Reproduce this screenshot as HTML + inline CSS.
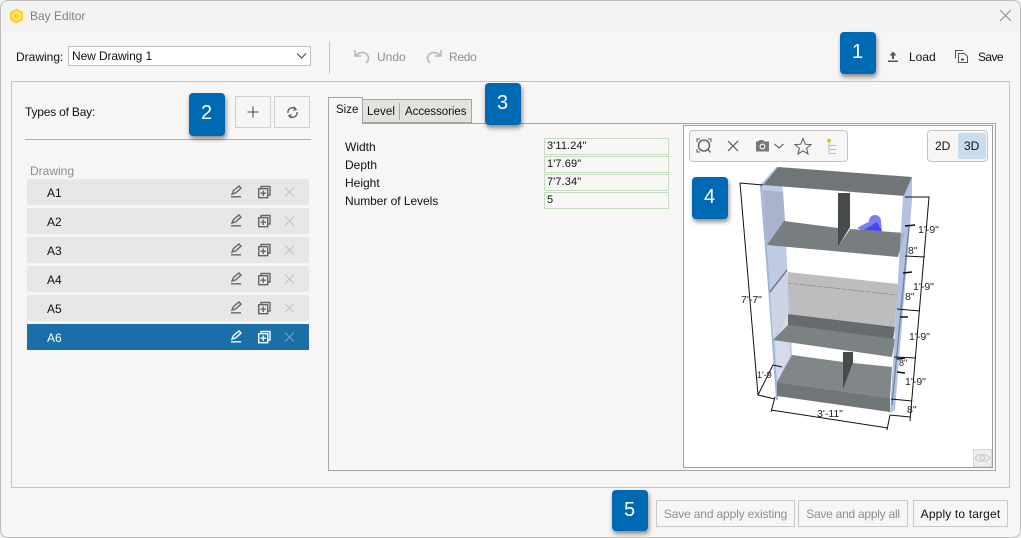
<!DOCTYPE html>
<html><head><meta charset="utf-8"><title>Bay Editor</title>
<style>
*{box-sizing:border-box}
html,body{margin:0;padding:0;width:1021px;height:538px;overflow:hidden;background:#f0f0f0;}
body{font-family:"Liberation Sans",sans-serif;font-size:12px;color:#111;position:relative}
.a{position:absolute}
.t{position:absolute;white-space:nowrap;line-height:16px}
.badge{position:absolute;width:36px;height:42px;background:#0069b4;border-radius:4px;box-shadow:1px 3px 5px rgba(0,0,0,.45);color:#fff;font-size:20px;text-align:center;line-height:41px;padding-right:1px}
.row{position:absolute;left:27px;width:282px;height:26px;background:#e7e7e7}
.row .n{position:absolute;left:20px;top:6px;line-height:16px}
.row svg{position:absolute;left:0;top:0}
.field{position:absolute;left:544px;width:125px;height:17px;border:1px solid #c6dcc0;padding-left:2px;line-height:14px;font-size:11px;letter-spacing:.1px}
.btn{position:absolute;top:500px;height:27px;border:1px solid #c8c8c8;background:#f7f6f5;text-align:center;line-height:27px}
</style></head><body>
<div class="a" style="left:0;top:0;width:1021px;height:538px;background:#f7f6f5;border:1px solid #bdbdbd;border-radius:8px;overflow:hidden">
<div class="a" style="left:0;top:0;width:1021px;height:30px;background:#f3f3f3"></div>
</div>
<svg class="a" style="left:9px;top:8px" width="15" height="16" viewBox="0 0 15 16"><path d="M7.5 .5L14 4v8l-6.500 3.500L1 12V4z" fill="#fbd12e"/><circle cx="7.500" cy="8" r="3.500" fill="none" stroke="#fff3b8" stroke-width="1.300"/></svg>
<div class="t" style="left:30px;top:8px;color:#7f7f7f">Bay Editor</div>
<svg class="a" style="left:999px;top:9px" width="13" height="13"><path d="M1 1L12 12M12 1L1 12" stroke="#8a8a8a" stroke-width="1" fill="none"/></svg>

<div class="t" style="left:16px;top:49px">Drawing:</div>
<div class="a" style="left:68px;top:46px;width:243px;height:20px;background:#fff;border:1px solid #bfbfbf"></div>
<div class="t" style="left:72px;top:48px;letter-spacing:-.1px">New Drawing 1</div>
<svg class="a" style="left:296px;top:52px" width="11" height="8"><path d="M1 1.500L5.500 6L10 1.500" stroke="#444" stroke-width="1.100" fill="none"/></svg>
<div class="a" style="left:329px;top:41px;width:1px;height:33px;background:#c4c4c4"></div>

<svg class="a" style="left:352px;top:48px" width="20" height="18"><path d="M3 2V8H9" stroke="#b5b5b5" stroke-width="1.500" fill="none"/><path d="M3.500 8C6 4 12 3.500 15 6.500C17.500 9 16.500 13 14 15" stroke="#b5b5b5" stroke-width="1.500" fill="none"/></svg>
<div class="t" style="left:377px;top:49px;color:#8f8f8f">Undo</div>
<svg class="a" style="left:424px;top:48px" width="20" height="18"><path d="M17 2V8H11" stroke="#b5b5b5" stroke-width="1.500" fill="none"/><path d="M16.500 8C14 4 8 3.500 5 6.500C2.500 9 3.500 13 6 15" stroke="#b5b5b5" stroke-width="1.500" fill="none"/></svg>
<div class="t" style="left:449px;top:49px;color:#8f8f8f;letter-spacing:-.3px">Redo</div>

<svg class="a" style="left:887px;top:50px" width="12" height="13"><path d="M6 1.500L2.500 5.500H5V9H7V5.500H9.500zM1 10.500H11V12H1z" fill="#555"/></svg>
<div class="t" style="left:909px;top:49px">Load</div>
<svg class="a" style="left:954px;top:49px" width="16" height="15" fill="none" stroke="#555"><path d="M1.500 9.500V1.500H9"/><path d="M4.500 4.500H10.500L13.500 7.500V13.500H4.500z"/><rect x="7" y="9.500" width="3" height="2" fill="#555" stroke="none"/></svg>
<div class="t" style="left:978px;top:49px;letter-spacing:-.6px">Save</div>

<div class="a" style="left:11px;top:81px;width:999px;height:407px;border:1px solid #c4c4c4"></div>
<div class="t" style="left:25px;top:104px;letter-spacing:-.2px">Types of Bay:</div>
<div class="a" style="left:25px;top:139px;width:286px;height:1px;background:#b0b0b0"></div>
<div class="a" style="left:235px;top:96px;width:36px;height:32px;border:1px solid #cfcfcf"></div>
<svg class="a" style="left:246px;top:105px" width="14" height="14"><path d="M7 1.500V12.500M1.500 7H12.500" stroke="#666" stroke-width="1.300"/></svg>
<div class="a" style="left:274px;top:96px;width:36px;height:32px;border:1px solid #cfcfcf"></div>
<svg class="a" style="left:286px;top:106px" width="13" height="13" fill="none" stroke="#555" stroke-width="1.300"><path d="M2 7A4.500 4.500 0 0 1 9.500 3M11 6A4.500 4.500 0 0 1 3.500 10"/><path d="M8 .8L10.300 3.500L7.300 4.500M5 12.200L2.700 9.500L5.700 8.500" stroke-width="1"/></svg>

<div class="t" style="left:30px;top:163px;color:#8c8c8c">Drawing</div>

<div class="row" style="top:179px"><span class="n">A1</span><svg width="282" height="26" fill="none"><g stroke="#666" stroke-width="1.400"><path d="M205 15L206.500 11.500L212 7L214 9.200L208.500 14zM204 17.800H214"/><rect x="231.700" y="9.700" width="9" height="9"/><path d="M234 9V7.500H243V16H241M236.200 11.500V17M233.500 14.200H239"/></g><path d="M258 8.500L267 17.500M267 8.500L258 17.500" stroke="#c3c3c3" stroke-width="1.200"/></svg></div>
<div class="row" style="top:208px"><span class="n">A2</span><svg width="282" height="26" fill="none"><g stroke="#666" stroke-width="1.400"><path d="M205 15L206.500 11.500L212 7L214 9.200L208.500 14zM204 17.800H214"/><rect x="231.700" y="9.700" width="9" height="9"/><path d="M234 9V7.500H243V16H241M236.200 11.500V17M233.500 14.200H239"/></g><path d="M258 8.500L267 17.500M267 8.500L258 17.500" stroke="#c3c3c3" stroke-width="1.200"/></svg></div>
<div class="row" style="top:237px"><span class="n">A3</span><svg width="282" height="26" fill="none"><g stroke="#666" stroke-width="1.400"><path d="M205 15L206.500 11.500L212 7L214 9.200L208.500 14zM204 17.800H214"/><rect x="231.700" y="9.700" width="9" height="9"/><path d="M234 9V7.500H243V16H241M236.200 11.500V17M233.500 14.200H239"/></g><path d="M258 8.500L267 17.500M267 8.500L258 17.500" stroke="#c3c3c3" stroke-width="1.200"/></svg></div>
<div class="row" style="top:266px"><span class="n">A4</span><svg width="282" height="26" fill="none"><g stroke="#666" stroke-width="1.400"><path d="M205 15L206.500 11.500L212 7L214 9.200L208.500 14zM204 17.800H214"/><rect x="231.700" y="9.700" width="9" height="9"/><path d="M234 9V7.500H243V16H241M236.200 11.500V17M233.500 14.200H239"/></g><path d="M258 8.500L267 17.500M267 8.500L258 17.500" stroke="#c3c3c3" stroke-width="1.200"/></svg></div>
<div class="row" style="top:295px"><span class="n">A5</span><svg width="282" height="26" fill="none"><g stroke="#666" stroke-width="1.400"><path d="M205 15L206.500 11.500L212 7L214 9.200L208.500 14zM204 17.800H214"/><rect x="231.700" y="9.700" width="9" height="9"/><path d="M234 9V7.500H243V16H241M236.200 11.500V17M233.500 14.200H239"/></g><path d="M258 8.500L267 17.500M267 8.500L258 17.500" stroke="#c3c3c3" stroke-width="1.200"/></svg></div>
<div class="row" style="top:324px;background:#1a6fa8;color:#fff"><span class="n">A6</span><svg width="282" height="26" fill="none"><g stroke="#fff" stroke-width="1.400"><path d="M205 15L206.500 11.500L212 7L214 9.200L208.500 14zM204 17.800H214"/><rect x="231.700" y="9.700" width="9" height="9"/><path d="M234 9V7.500H243V16H241M236.200 11.500V17M233.500 14.200H239"/></g><path d="M258 8.500L267 17.500M267 8.500L258 17.500" stroke="#6d9fc4" stroke-width="1.200"/></svg></div>

<!-- tab panel -->
<div class="a" style="left:328px;top:123px;width:668px;height:348px;border:1px solid #a6a6a6"></div>
<div class="a" style="left:328px;top:97px;width:35px;height:27px;border:1px solid #a6a6a6;border-bottom:none;background:#f7f6f5"></div>
<div class="t" style="left:336px;top:102px;font-size:11.500px">Size</div>
<div class="a" style="left:363px;top:99px;width:109px;height:24px;border:1px solid #a6a6a6;border-left:none;background:#e3e2df"></div>
<div class="t" style="left:367px;top:104px;font-size:11.500px;letter-spacing:.1px">Level</div>
<div class="a" style="left:399px;top:103px;width:1px;height:17px;background:#a6a6a6"></div>
<div class="t" style="left:405px;top:104px;font-size:11.500px;letter-spacing:-.05px">Accessories</div>

<div class="t" style="left:345px;top:139px">Width</div>
<div class="t" style="left:345px;top:157px">Depth</div>
<div class="t" style="left:345px;top:175px">Height</div>
<div class="t" style="left:345px;top:193px;letter-spacing:-.05px">Number of Levels</div>
<div class="field" style="top:138px">3'11.24"</div>
<div class="field" style="top:156px">1'7.69"</div>
<div class="field" style="top:174px">7'7.34"</div>
<div class="field" style="top:192px">5</div>

<!-- viewer -->
<div class="a" style="left:683px;top:125px;width:310px;height:343px;background:#fff;border:1px solid #a0a0a0"></div>
<div class="a" style="left:689px;top:130px;width:159px;height:32px;background:#f7f6f5;border:1px solid #c4c4c4;border-radius:4px"></div>
<svg class="a" style="left:695px;top:137px" width="155" height="20" fill="none" stroke="#555" stroke-width="1.300">
<circle cx="9" cy="8.500" r="5.500"/><path d="M13 12.500L15.500 15.500"/><path d="M2 5V2H5M13 2H16V5M2 12V15H5" stroke-width="1"/>
<path d="M33 4L43 14M43 4L33 14" stroke-width="1.200"/>
<path d="M61 4.500H63L64.500 3H68L69.500 4.500H74V14.500H61z" fill="#777" stroke="none"/><circle cx="67.500" cy="9.500" r="3" fill="#f7f6f5" stroke="none"/><circle cx="67.500" cy="9.500" r="1.800" fill="#777" stroke="none"/>
<path d="M79.500 7L84 11L88.500 7" stroke-width="1.100"/>
<path d="M108 1.500L110.300 7.200L116 7.600L111.600 11.300L113 17L108 13.800L103 17L104.400 11.300L100 7.600L105.700 7.200z" stroke-width="1"/>
<path d="M134 5V16.500M134 8.500H141M134 12.500H141M134 16.500H141" stroke="#bbb" stroke-width="1"/><circle cx="134" cy="3.500" r="1.800" fill="#c6c400" stroke="none"/>
</svg>
<div class="a" style="left:927px;top:130px;width:61px;height:32px;background:#f7f6f5;border:1px solid #c4c4c4;border-radius:4px"></div>
<div class="a" style="left:958px;top:133px;width:28px;height:26px;background:#c8dcec;border-radius:2px"></div>
<div class="t" style="left:935px;top:138px">2D</div>
<div class="t" style="left:964px;top:138px">3D</div>

<svg class="a" style="left:684px;top:126px" width="308" height="341" viewBox="684 126 308 341">
<!-- back wall panel -->
<polygon points="788,272 898,284 895,327 788,314" fill="#bdbdbd"/>
<path d="M788,283L897,295" stroke="#888" stroke-width=".7" stroke-dasharray="5 1"/>
<!-- left translucent -->
<polygon points="760,185 777,166 783,190 792,355 777,400 770,300" fill="#bfcae4"/>
<path d="M761,185L770,300L777,400" stroke="#a4b4da" stroke-width="2" fill="none"/>
<polygon points="763,190 783,192 785,221 767,245" fill="#aab2cc"/>
<polygon points="770,292 787,270 788,314 773,340" fill="#cfd4e4"/>
<path d="M770,292L787,270" stroke="#66718a" stroke-width="1.400"/>
<polygon points="775,340 788,314 790,355 777,382" fill="#d5dbeb"/>
<!-- blue object -->
<polygon points="857,228 870,221 881,221 882,232 866,232" fill="#7e7eee"/>
<circle cx="875" cy="221" r="6" fill="#7e7eee"/>
<polygon points="864,230 877,222 882,231" fill="#4646ee"/>
<!-- posts -->
<polygon points="838,193 850,193 850,227 838,247" fill="#474b4c"/>
<polygon points="843,352 853,352 853,363 843,390" fill="#474b4c"/>
<!-- shelves -->
<polygon points="778,167 912,177 905,196 763,185" fill="#707577"/>
<polygon points="784,221 838,228 838,247 850,229 905,233 898,257 767,245" fill="#787d7f"/>
<polygon points="788,314 895,327 893,340 788,326" fill="#666b6d"/>
<polygon points="788,325 895,339 892,357 773,340" fill="#7c8183"/>
<polygon points="792,355 843,362 843,390 853,363 892,367 890,398 777,382" fill="#818688"/>
<polygon points="777,382 890,398 890,412 777,396" fill="#707577"/>
<!-- right translucent -->
<polygon points="903,197 912,177 912,200 895,410 890,413" fill="#a9b8dc" opacity=".88"/>
<path d="M909,226L892,405" stroke="#6f80a8" stroke-width="1.300"/>
<!-- dims -->
<g stroke="#111" stroke-width="1" fill="none">
<path d="M740,183L763,185M740,183L758,395L775,399M758,395L773,365L782,367"/>
<path d="M775,397L771,412M771,410L888,428M890,415L887,430"/>
<path d="M905,197L929,197L910,421M905,256L925,257M897,309L920,311M894,357L916,358M891,399L912,401M890,415L910,417"/>
<path d="M905,226L915,225M903,273L912,272M900,317L908,317M897,359L905,358M897,372L905,373" stroke-width="1.600"/>
</g>
<g font-family="Liberation Sans,sans-serif" font-size="10.500" fill="#222">
<text x="741" y="303">7'-7"</text><text x="757" y="378" font-size="9">1'-9</text><text x="817" y="417">3'-11"</text>
<text x="918" y="233">1'-9"</text><text x="908" y="254">8"</text><text x="913" y="290">1'-9"</text><text x="905" y="300">8"</text>
<text x="909" y="340">1'-9"</text><text x="899" y="366" font-size="9">8"</text><text x="905" y="385">1'-9"</text><text x="907" y="413">8"</text>
</g>
</svg>
<div class="a" style="left:973px;top:449px;width:19px;height:18px;background:#eeeeee;border:1px solid #d8d8d8"></div>
<svg class="a" style="left:974px;top:452px" width="17" height="12" fill="none" stroke="#cfcfcf" stroke-width="1.300"><path d="M1 6C4 1.500 13 1.500 16 6C13 10.500 4 10.500 1 6z"/><circle cx="8.500" cy="6" r="2.200"/></svg>

<div class="btn" style="left:656px;width:139px;color:#8e8e8e;letter-spacing:-.15px">Save and apply existing</div>
<div class="btn" style="left:798px;width:110px;color:#8e8e8e;letter-spacing:-.25px">Save and apply all</div>
<div class="btn" style="left:913px;width:95px;letter-spacing:.15px">Apply to target</div>

<div class="badge" style="left:840px;top:32px">1</div>
<div class="badge" style="left:189px;top:93px;height:43px">2</div>
<div class="badge" style="left:485px;top:83px">3</div>
<div class="badge" style="left:692px;top:177px">4</div>
<div class="badge" style="left:612px;top:490px;height:41px">5</div>
</body></html>
